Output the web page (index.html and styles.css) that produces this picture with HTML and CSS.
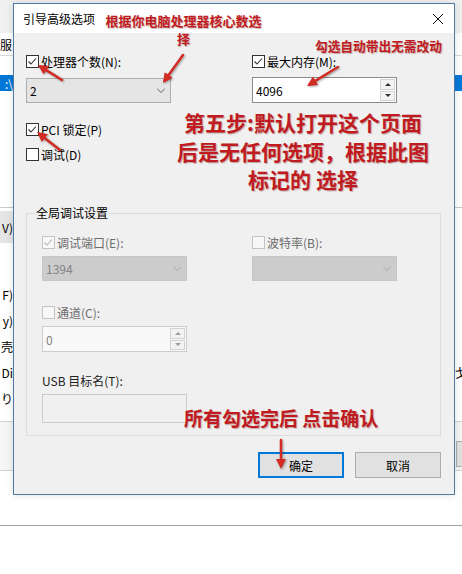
FILE: index.html
```html
<!DOCTYPE html>
<html lang="zh-CN">
<head>
    <meta charset="UTF-8">
    <title>引导高级选项</title>
    <link rel="stylesheet" href="styles.css">
</head>
<body>
    <div class="screen">
        <!-- 后面的系统配置窗口，只露出两侧边缘 -->
        <div class="backdrop">
            <div class="bw-head"></div>
            <div class="bw-tabs"><span class="bw-l start">服</span></div>
            <div class="bw-sel"><span class="bw-l">:\</span></div>
            <div class="bw-list"></div>
            <div class="bw-tool"><span class="bw-l band">V)</span></div>
            <div class="bw-opts">
                <div class="bw-opt"><span class="bw-l">F)</span></div>
                <div class="bw-opt"><span class="bw-l">y)</span></div>
                <div class="bw-opt"><span class="bw-l">壳</span></div>
                <div class="bw-opt"><span class="bw-l">Di</span><span class="bw-r">戈</span></div>
                <div class="bw-opt"><span class="bw-l">り</span></div>
            </div>
            <div class="bw-foot"><span class="bw-btn"></span></div>
            <div class="bw-rule"></div>
        </div>

        <section class="dialog">
            <header class="dlg-title">
                <span>引导高级选项</span>
                <svg class="dlg-close" viewBox="0 0 10 10"><path d="M0 0L10 10M10 0L0 10"/></svg>
            </header>

            <div class="dlg-body">
                <div class="cols">
                    <div class="field">
                        <label class="chk"><span class="box"><svg viewBox="0 0 11 11"><path d="M1.5 5.5l2.5 2.5 5-5.5"/></svg></span>处理器个数(N):</label>
                        <div class="combo"><span>2</span><svg class="chev" viewBox="0 0 8 5"><path d="M0 0.5l4 4 4-4"/></svg></div>
                    </div>
                    <div class="field">
                        <label class="chk"><span class="box"><svg viewBox="0 0 11 11"><path d="M1.5 5.5l2.5 2.5 5-5.5"/></svg></span>最大内存(M):</label>
                        <div class="spin">
                            <span>4096</span>
                            <span class="spin-btns">
                                <i><svg viewBox="0 0 6 3"><path d="M0 3L3 0L6 3z"/></svg></i>
                                <i><svg viewBox="0 0 6 3"><path d="M0 0L3 3L6 0z"/></svg></i>
                            </span>
                        </div>
                    </div>
                </div>

                <div class="opts">
                    <label class="chk"><span class="box"><svg viewBox="0 0 11 11"><path d="M1.5 5.5l2.5 2.5 5-5.5"/></svg></span>PCI 锁定(P)</label>
                    <label class="chk"><span class="box"></span>调试(D)</label>
                </div>

                <div class="group">
                    <div class="group-title">全局调试设置</div>
                    <div class="cols inner">
                        <div class="field">
                            <label class="chk off"><span class="box"><svg viewBox="0 0 11 11"><path d="M1.5 5.5l2.5 2.5 5-5.5"/></svg></span>调试端口(E):</label>
                            <div class="combo off"><span>1394</span><svg class="chev" viewBox="0 0 8 5"><path d="M0 0.5l4 4 4-4"/></svg></div>
                        </div>
                        <div class="field">
                            <label class="chk off"><span class="box"></span>波特率(B):</label>
                            <div class="combo off"><span></span><svg class="chev" viewBox="0 0 8 5"><path d="M0 0.5l4 4 4-4"/></svg></div>
                        </div>
                    </div>
                    <div class="field channel">
                        <label class="chk off"><span class="box"></span>通道(C):</label>
                        <div class="spin off">
                            <span>0</span>
                            <span class="spin-btns">
                                <i><svg viewBox="0 0 6 3"><path d="M0 3L3 0L6 3z"/></svg></i>
                                <i><svg viewBox="0 0 6 3"><path d="M0 0L3 3L6 0z"/></svg></i>
                            </span>
                        </div>
                    </div>
                    <div class="field usb">
                        <div class="usb-label">USB 目标名(T):</div>
                        <div class="text-input"></div>
                    </div>
                </div>

                <div class="buttons">
                    <button class="btn default">确定</button>
                    <button class="btn">取消</button>
                </div>
            </div>
        </section>

        <!-- 红色标注 -->
        <div class="note note-cpu">根据你电脑处理器核心数选<br>择</div>
        <div class="note note-mem">勾选自动带出无需改动</div>
        <div class="note note-step">第五步:默认打开这个页面<br>后是无任何选项，根据此图<br>标记的 选择</div>
        <div class="note note-ok">所有勾选完后 点击确认</div>

        <svg class="arrows" viewBox="0 0 462 574">
            <defs>
                <marker id="head" viewBox="0 0 10 10" refX="7" refY="5" markerWidth="4" markerHeight="4" orient="auto">
                    <path d="M0 0L10 5L0 10z" fill="#d22b24"/>
                </marker>
            </defs>
            <g stroke="#d22b24" stroke-width="2.5" stroke-linecap="round" marker-end="url(#head)">
                <line x1="62" y1="80" x2="40.5" y2="66.6"/>
                <line x1="183" y1="55" x2="164.7" y2="80.6"/>
                <line x1="338" y1="67" x2="309.6" y2="84.4"/>
                <line x1="60" y1="150" x2="39.4" y2="133.9"/>
                <line x1="281" y1="440" x2="281" y2="466"/>
            </g>
        </svg>
    </div>
</body>
</html>
```

FILE: styles.css
```css
* {
    margin: 0;
    padding: 0;
    box-sizing: border-box;
}

body {
    width: 462px;
    height: 574px;
    overflow: hidden;
    background: #fff;
    font-family: "Noto Sans CJK SC", "Noto Sans", sans-serif;
    font-size: 12px;
    color: #000;
}

.screen {
    position: relative;
    width: 462px;
    height: 574px;
}

/* ---- 背后的窗口 ---- */
.backdrop {
    display: flex;
    flex-direction: column;
}

.bw-head {
    height: 33px;
    background: #f0f0f0;
}

.bw-tabs {
    height: 23px;
    display: flex;
    align-items: center;
    border-bottom: 1px solid #d9d9d9;
}

.bw-l {
    width: 13px;
    display: flex;
    justify-content: flex-end;
    white-space: nowrap;
}

.bw-l.start {
    justify-content: flex-start;
}

.bw-r {
    width: 7px;
    white-space: nowrap;
}

.bw-sel {
    margin-top: 19px;
    height: 16px;
    display: flex;
    align-items: center;
    background: #0078d7;
    color: #fff;
}

.bw-list {
    height: 117px;
    border-bottom: 1px solid #c9c9c9;
}

.bw-tool {
    margin-top: 3px;
    height: 32px;
    display: flex;
}

.bw-l.band {
    align-items: center;
    background: #e5e5e5;
}

.bw-opts {
    margin-top: 38px;
    display: flex;
    flex-direction: column;
}

.bw-opt {
    height: 26px;
    display: flex;
    align-items: center;
    justify-content: space-between;
}

.bw-foot {
    margin-top: 10px;
    height: 50px;
    display: flex;
    align-items: flex-end;
    justify-content: flex-end;
    padding-bottom: 3px;
    background: #f5f5f5;
    border-top: 1px solid #d0d0d0;
    border-bottom: 1px solid #d0d0d0;
}

.bw-btn {
    width: 6px;
    height: 26px;
    background: #e1e1e1;
    border: 1px solid #adadad;
    border-right: none;
}

.bw-rule {
    margin-top: 54px;
    border-top: 1px solid #a0a0a0;
}

/* ---- 对话框 ---- */
.dialog {
    position: absolute;
    left: 13px;
    top: 3px;
    width: 442px;
    height: 492px;
    border: 1px solid #4f7aa3;
    background: #f0f0f0;
    box-shadow: 0 0 8px rgba(0, 0, 0, 0.12);
}

.dlg-title {
    height: 29px;
    display: flex;
    align-items: center;
    justify-content: space-between;
    padding: 0 11px 0 9px;
    background: #fff;
}

.dlg-close {
    width: 10px;
    height: 10px;
    stroke: #111;
    stroke-width: 1;
    fill: none;
}

.dlg-body {
    padding: 22px 13px 0 12px;
}

.cols {
    display: grid;
    grid-template-columns: 145px 145px;
    column-gap: 81px;
}

.cols.inner {
    column-gap: 65px;
    margin-top: 16px;
}

.chk {
    display: flex;
    align-items: center;
    gap: 2px;
    height: 13px;
    line-height: 13px;
    white-space: nowrap;
}

.box {
    width: 13px;
    height: 13px;
    flex: none;
    display: flex;
    align-items: center;
    justify-content: center;
    border: 1px solid #333;
    background: #fff;
}

.box svg {
    width: 11px;
    height: 11px;
    fill: none;
    stroke: #333;
    stroke-width: 1.1;
}

.chk.off {
    color: #6d6d6d;
}

.chk.off .box {
    border-color: #c4c4c4;
    background: #f7f7f7;
}

.chk.off .box svg {
    stroke: #b8b8b8;
}

.combo {
    margin-top: 10px;
    height: 25px;
    display: flex;
    align-items: center;
    justify-content: space-between;
    padding: 0 5px 0 3px;
    border: 1px solid #adadad;
    background: #e5e5e5;
}

.chev {
    width: 8px;
    height: 5px;
    fill: none;
    stroke: #606060;
    stroke-width: 1;
}

.combo.off {
    margin-top: 7px;
    border-color: #c6c6c6;
    background: #cccccc;
    color: #838383;
}

.combo.off .chev {
    stroke: #a8a8a8;
}

.spin {
    margin-top: 9px;
    height: 26px;
    display: flex;
    align-items: center;
    justify-content: space-between;
    padding: 1px 1px 1px 3px;
    border: 1px solid #8c8c8c;
    background: #fff;
}

.spin-btns {
    align-self: stretch;
    width: 15px;
    display: flex;
    flex-direction: column;
    gap: 1px;
}

.spin-btns i {
    flex: 1;
    display: flex;
    align-items: center;
    justify-content: center;
    border: 1px solid #d2d2d2;
    background: #f3f3f3;
}

.spin-btns svg {
    width: 6px;
    height: 3px;
    fill: #333;
}

.spin.off {
    margin-top: 7px;
    border-color: #cccccc;
    background: #f9f9f9;
    color: #838383;
}

.spin.off .spin-btns svg {
    fill: #9a9a9a;
}

.opts {
    margin-top: 20px;
    display: flex;
    flex-direction: column;
    gap: 12px;
}

.group {
    margin-top: 52px;
    padding: 0 15px 12px;
    border: 1px solid #dcdcdc;
}

.group-title {
    width: fit-content;
    margin: -8px 0 0 -7px;
    padding: 0 1px;
    line-height: 14px;
    background: #f0f0f0;
}

.channel {
    margin-top: 25px;
    width: 145px;
}

.usb {
    margin-top: 22px;
    width: 145px;
}

.usb-label {
    height: 14px;
    line-height: 14px;
    color: #222;
}

.text-input {
    margin-top: 6px;
    height: 29px;
    border: 1px solid #cccccc;
    background: #f0f0f0;
}

.buttons {
    margin-top: 16px;
    display: flex;
    justify-content: flex-end;
    gap: 11px;
}

.btn {
    width: 86px;
    height: 26px;
    border: 1px solid #adadad;
    background: #e1e1e1;
    font-family: inherit;
    font-size: 12px;
    color: #000;
}

.btn.default {
    border: 2px solid #0078d7;
}

/* ---- 标注 ---- */
.note {
    position: absolute;
    color: #bf1b21;
    font-weight: 700;
    white-space: nowrap;
    text-shadow: 1px 1px 1px rgba(80, 0, 0, 0.3);
}

.note-cpu {
    left: 104px;
    top: 12px;
    width: 159px;
    font-size: 13px;
    line-height: 18px;
    text-align: center;
}

.note-mem {
    left: 315px;
    top: 38px;
    font-size: 12.7px;
    line-height: 16px;
}

.note-step {
    left: 173px;
    top: 108px;
    width: 260px;
    font-size: 21px;
    line-height: 28.5px;
    text-align: center;
}

.note-ok {
    left: 184px;
    top: 406px;
    font-size: 19px;
    line-height: 24px;
}

.arrows {
    position: absolute;
    left: 0;
    top: 0;
    width: 462px;
    height: 574px;
    pointer-events: none;
    filter: drop-shadow(1px 1px 1px rgba(0, 0, 0, 0.35));
}
```
